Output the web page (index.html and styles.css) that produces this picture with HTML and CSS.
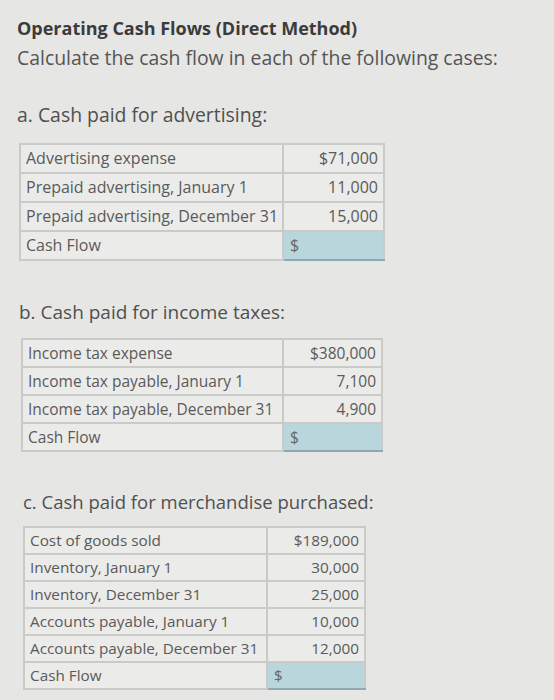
FILE: index.html
```html
<!DOCTYPE html>
<html>
<head>
<meta charset="utf-8">
<link rel="stylesheet" href="styles.css">
</head>
<body>
<div class="page">
  <h1 class="title">Operating Cash Flows (Direct Method)</h1>
  <p class="subtitle">Calculate the cash flow in each of the following cases:</p>

  <section class="case case-a">
    <h2 class="case-head">a. Cash paid for advertising:</h2>
    <table class="grid">
      <tr><td class="lbl">Advertising expense</td><td class="val">$71,000</td></tr>
      <tr><td class="lbl">Prepaid advertising, January 1</td><td class="val">11,000</td></tr>
      <tr><td class="lbl">Prepaid advertising, December 31</td><td class="val">15,000</td></tr>
      <tr><td class="lbl">Cash Flow</td><td class="input">$</td></tr>
    </table>
  </section>

  <section class="case case-b">
    <h2 class="case-head">b. Cash paid for income taxes:</h2>
    <table class="grid">
      <tr><td class="lbl">Income tax expense</td><td class="val">$380,000</td></tr>
      <tr><td class="lbl">Income tax payable, January 1</td><td class="val">7,100</td></tr>
      <tr><td class="lbl">Income tax payable, December 31</td><td class="val">4,900</td></tr>
      <tr><td class="lbl">Cash Flow</td><td class="input">$</td></tr>
    </table>
  </section>

  <section class="case case-c">
    <h2 class="case-head">c. Cash paid for merchandise purchased:</h2>
    <table class="grid">
      <tr><td class="lbl">Cost of goods sold</td><td class="val">$189,000</td></tr>
      <tr><td class="lbl">Inventory, January 1</td><td class="val">30,000</td></tr>
      <tr><td class="lbl">Inventory, December 31</td><td class="val">25,000</td></tr>
      <tr><td class="lbl">Accounts payable, January 1</td><td class="val">10,000</td></tr>
      <tr><td class="lbl">Accounts payable, December 31</td><td class="val">12,000</td></tr>
      <tr><td class="lbl">Cash Flow</td><td class="input">$</td></tr>
    </table>
  </section>
</div>
</body>
</html>
```

FILE: styles.css
```css
html, body {
  margin: 0;
  padding: 0;
  background: #e6e6e4;
}
body {
  font-family: "Open Sans", "Liberation Sans", sans-serif;
  color: #555;
  width: 554px;
  height: 700px;
  overflow: hidden;
}
.page {
  padding: 13px 0 0 17px;
}
.title {
  margin: 0;
  font-size: 18px;
  line-height: 30px;
  font-weight: 700;
  color: #3b3b3b;
}
.subtitle {
  margin: 0;
  font-size: 19.4px;
  line-height: 30px;
  color: #555;
}
.case-head {
  margin: 0;
  font-weight: 400;
  line-height: 30px;
  color: #505050;
}
.grid {
  border-collapse: collapse;
  background: #ebebe9;
  color: #5a5a5a;
}
.grid td {
  border: 2px solid #cacac8;
  padding: 0;
}
.lbl {
  text-align: left;
  padding-left: 5px !important;
}
.val {
  text-align: right;
  padding-right: 5px !important;
}
.input {
  background: #b9d6dd;
  border-bottom: 2px solid #8fa9b0 !important;
  text-align: left;
  padding-left: 6px !important;
  color: #666;
}

/* section a */
.case-a { margin-top: 27px; }
.case-a .case-head { font-size: 19.4px; }
.case-a .grid { margin: 13px 0 0 2px; width: 366px; font-size: 16px; }
.case-a .grid td { height: 27px; line-height: 27px; }
.case-a .lbl { width: 256px; }

/* section b */
.case-b { margin-top: 36px; padding-left: 2px; }
.case-b .case-head { font-size: 19px; }
.case-b .grid { margin: 11px 0 0 2px; width: 362px; font-size: 15.5px; }
.case-b .grid td { height: 26px; line-height: 26px; }
.case-b .lbl { width: 254px; }

/* section c */
.case-c { margin-top: 35px; padding-left: 6px; }
.case-c .case-head { font-size: 18.5px; }
.case-c .grid { margin: 9px 0 0 0; width: 343px; font-size: 15.3px; }
.case-c .grid td { height: 25px; line-height: 25px; }
.case-c .lbl { width: 236px; }
```
